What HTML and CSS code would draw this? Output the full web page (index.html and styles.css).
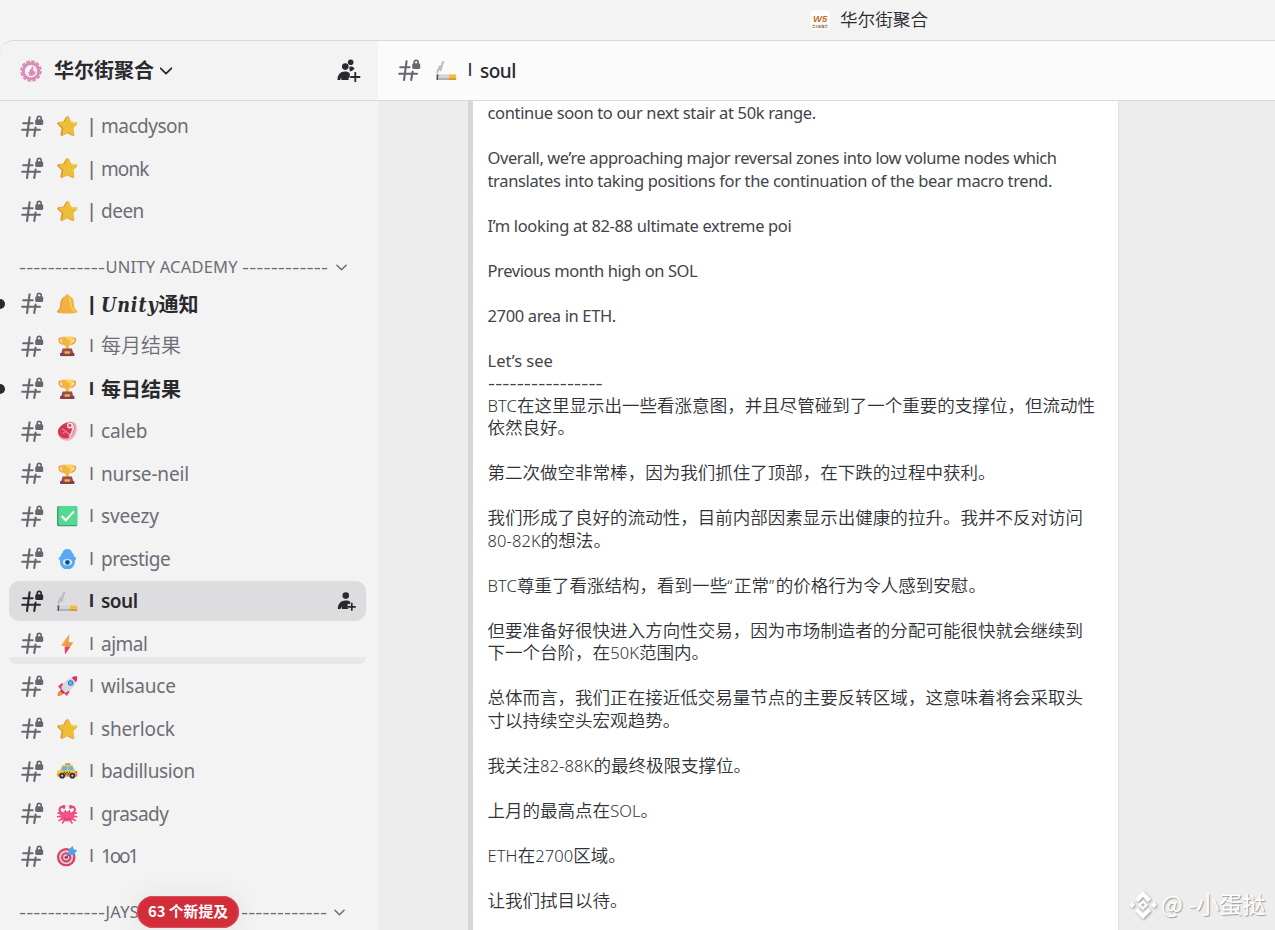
FILE: index.html
```html
<!DOCTYPE html>
<html lang="zh-CN">
<head>
<meta charset="utf-8">
<title>华尔街聚合</title>
<link rel="stylesheet" href="styles.css">
</head>
<body>
<svg class="defs" aria-hidden="true">
  <symbol id="hash" viewBox="0 0 23 23">
    <g fill="none" stroke="currentColor" stroke-width="2.1" stroke-linecap="round"><path d="M8.6 2.200 6 21M14.600 12.600 13.200 21M2.200 8.200H11.600M1.200 14.800H19"/><path d="M16.200 5V3.400a2 2 0 0 1 4 0V5" stroke-width="1.600"/></g>
    <rect x="14.200" y="4.200" width="8" height="5.800" rx="1.500" fill="currentColor"/>
  </symbol>
  <symbol id="chev" viewBox="0 0 12 12"><path d="M1 3.500 6 8.500 11 3.500" fill="none" stroke="currentColor" stroke-width="1.600" stroke-linecap="round" stroke-linejoin="round"/></symbol>
  <symbol id="invite" viewBox="0 0 19 19">
    <circle cx="8.800" cy="3.600" r="3.300" fill="currentColor"/>
    <path d="M.8 17c0-5.500 3.200-8.600 8-8.600 1.800 0 3.300.4 4.400 1.300v2.300h-2.500v4l1 1H5l-.6-2.400L3.600 17z" fill="currentColor"/>
    <path d="M14.800 10.800v8M10.800 14.800h8" stroke="currentColor" stroke-width="1.700"/>
  </symbol>
  <symbol id="people" viewBox="0 0 24 24">
    <circle cx="8.300" cy="7.600" r="3.300" fill="currentColor"/><circle cx="13.700" cy="3.200" r="2.800" fill="currentColor"/>
    <path d="M.5 21c0-5.500 3-8.500 7.500-8.500 2 0 3.600.5 4.800 1.700V18l-1.500 1.500.5 1.500H4.500L4 18.400 3.200 21z" fill="currentColor"/>
    <path d="M12.500 7.600c2.200-.4 4 .2 5.200 1.900l-2 1.800-2.400 1.100-.8-1.300z" fill="currentColor"/>
    <path d="M18.300 13v10M13.300 18h10" stroke="currentColor" stroke-width="1.800"/>
  </symbol>
  <symbol id="star" viewBox="0 0 20 20">
    <path d="M9.700.3c.8-.4 1.500 0 1.800.8l1.800 4.400 5.400.5c1.300.2 1.500 1.400.7 2.200l-3.700 3.600 1.200 5.800c.2 1.500-1 2.200-2.200 1.600L10 16.800l-4.500 2.400c-1.300.5-2.400-.3-2.100-1.600l1.100-5.700L.5 8C-.2 7.100.1 6.200 1.300 6l4.900-.6L8.500 1.200z" fill="#db9638"/>
    <path d="M10.700.2c.6 0 1 .4 1.300 1l1.700 4.400 5 .5c1.200.1 1.500 1.300.7 2.100l-3.600 3.600 1 5.700c.2 1.300-.7 1.900-1.800 1.400l-4.200-2.700-4.200 2.300c-1 .4-1.600-.2-1.400-1.300l1-5.700L2.100 8C1.400 7.200 1.700 6.500 2.800 6.300l4.800-.7 2-4.300c.3-.6.600-1.100 1.100-1.100z" fill="#edbe38"/>
    <path d="M13.700 5.600l5 .5c.9.100 1.300.9.900 1.600l-5-.7z" fill="#f5d15c"/>
  </symbol>
  <symbol id="bell" viewBox="0 0 20 20">
    <path d="M10 .3c1.100 0 1.800.7 1.900 1.700 3.100.9 4.400 3.600 4.600 7 .2 4 1 5.500 2.700 7.200.8.800.7 2.200-1 2.300-5.400.8-11 .8-16.400 0-1.600-.2-1.800-1.500-1-2.300 1.900-1.700 2.600-3.200 2.700-7.200.2-3.400 1.500-6.100 4.600-7C8.200 1 8.900.3 10 .3z" fill="#f3b13f"/>
    <path d="M6.500 3.300C4.300 5.400 5 9.800 4 13c-.8 2-2.500 2.800-2.200 5.500-1.600-.2-1.800-1.500-1-2.300 1.900-1.700 2.600-3.200 2.700-7.200.1-2.500.9-4.600 3-5.700z" fill="#e78c41"/>
    <path d="M11.500 3c2 1.500 1.500 5 2.300 9 .6 2.300 2 3.500 3.700 5" fill="none" stroke="#fad15e" stroke-width="1.500"/>
  </symbol>
  <symbol id="trophy" viewBox="0 0 20 20">
    <path d="M4.500 2.500H2.300c-.5 3 .7 4.900 4 5.600M15.500 2.500h2.200c.5 3-.7 4.900-4 5.600" fill="none" stroke="#ed9c3d" stroke-width="1.500"/>
    <path d="M4.200.7h11.600c.2 4.700-1 8-4.300 9.100V13H8.500V9.800C5.200 8.700 4 5.400 4.200.7z" fill="#f4b53f"/><path d="M9 .7h6.800c.1 4-.7 6.500-3.300 8.300C14 5 12.500 3 9 3z" fill="#fbd45b"/>
    <path d="M5.400 12.300h9.200l1.200 4.200H4.200z" fill="#9a4e49"/><path d="M3 16.500h14v2.200c0 .7-.4 1-1 1H4c-.6 0-1-.3-1-1z" fill="#824247"/>
    <rect x="7.300" y="14.800" width="5.400" height="2.400" rx=".5" fill="#efb24a"/>
  </symbol>
  <symbol id="meat" viewBox="0 0 20 20">
    <path d="M12 .8c5-1 7.500 2 7.400 6.700-.2 5.500-3.500 11-8.400 11.700C6 20 .5 16.500.7 11 .9 6 7 1.300 12 .8z" fill="#efb0b8"/>
    <path d="M10.700 1.500c4.300-1 6.600 1.400 6.400 5.300-.3 4.900-3.400 9.700-7.600 10.200C5 17.500.800 14.500 1 10 1.200 6.200 6.500 2 10.700 1.500z" fill="#d4365a"/>
    <path d="M13.500 2.500c4 2 2.200 8.500-1.500 12.700" fill="none" stroke="#f7dfd5" stroke-width="1.800"/><circle cx="12.600" cy="4.300" r="2.900" fill="#f8e6df"/><circle cx="12.500" cy="4.300" r="1.500" fill="#d7516a"/><path d="M5 7.500l4 2.700 3 3M9 10.200 5.500 12" fill="none" stroke="#f27b91" stroke-width="1.200"/>
  </symbol>
  <symbol id="check" viewBox="0 0 20 20">
    <rect width="20" height="20" rx="2" fill="#3c9d73"/><rect x="1.400" width="18.600" height="18.500" rx="1.800" fill="#55d890"/><path d="M4.500 9.700 8.500 13.800 16.500 5.200" fill="none" stroke="#fff" stroke-width="2"/>
  </symbol>
  <symbol id="eye" viewBox="0 0 20 20">
    <path d="M5.500 3.600C5.800 1.300 7.500 0 10 0s4.300 1.300 4.700 3.600c1.300.5 1.700 1.800 1.700 3.200l2.100 1.800c.5 1-.3 2-1 2.400.3 5-2.600 9-7.400 9s-7.600-4-7.200-9C2 10.500 1.300 9.500 1.900 8.600l2-1.800C3.900 5.400 4.300 4.100 5.500 3.600z" fill="#59a9f5"/>
    <ellipse cx="10.200" cy="13" rx="4.400" ry="3.200" fill="#d7edff"/><circle cx="10.200" cy="13" r="2.500" fill="#3987d3"/><circle cx="10.200" cy="13" r="1.500" fill="#1e3257"/>
  </symbol>
  <symbol id="cig" viewBox="0 0 20 20">
    <path d="M1.500 12.800C.5 9.500 4.300 9 3.600 5.500M3.900 10.500C6.300 8 4.500 4.500 7.500 1.200" fill="none" stroke="#bcbcbe" stroke-width="1.900"/>
    <rect x=".5" y="14" width="2.500" height="5.500" fill="#55545b"/><rect x="2.200" y="14" width="10.500" height="5.500" fill="#d4d5d8"/><rect x="2.200" y="17.500" width="10.500" height="2" fill="#b2b3b8"/><rect x="12.500" y="14" width="7.300" height="5.500" fill="#f5c341"/><rect x="12.500" y="17.500" width="7.300" height="2" fill="#dc983f"/><path d="M14 15.500h1M17 16h1" stroke="#de963b"/>
  </symbol>
  <symbol id="bolt" viewBox="0 0 20 20">
    <path d="M12 .2 4.300 11.200 9 12 7.800 20 15.800 8.300 11.300 7.700z" fill="#ec9c40"/><path d="M12 .2 4.300 11.200 7 11.500l4-5z" fill="#f0a544"/><path d="M7.400 12.300 12.700 12.700 7.800 20z" fill="#e83c72"/>
  </symbol>
  <symbol id="rocket" viewBox="0 0 20 20">
    <path d="M.5 19.500c0-3 1-5 3.500-5.500l2.500 2.500c-1 2-3 3-6 3z" fill="#f09036"/><path d="M1 10.300 4.500 7l4 1-5 5zM9.500 19.500l2.700-4-.6-4-4.800 5z" fill="#e8386d"/>
    <path d="M4 12C6 6 11 1 18 1c.8 0 1.300.5 1.200 1.300C18.500 9.500 14 14 8 16.500z" fill="#d4d8df"/><path d="M4 12l4 4.500-2.300.8-2.300-2.500z" fill="#ce315d"/><path d="M14.500 1.700C16 .5 17.500.2 18.600.3c.8 0 1.400.5 1.200 1.300.1 1.500-.5 3-1.300 4.400z" fill="#dd3158"/><circle cx="13.300" cy="6.800" r="2.700" fill="#356eb0"/><circle cx="13.300" cy="6.800" r="1.900" fill="#5baef5"/>
  </symbol>
  <symbol id="taxi" viewBox="0 0 20 20">
    <path d="M8 2.300h5V4H8z" fill="#b49a53"/><path d="M5 4h10l2.500 5 2 1.200.5 4.800H.5L0 9.500 3 9z" fill="#f6c540"/><path d="M5.800 5h4v4H3.800zM11 5h3.800l1.500 4H11z" fill="#60b5f5"/><path d="M0 12.500h20V15H.5z" fill="#dd923b"/><path d="M6.500 10.500h1.300v1.300H6.500zm2.600 0h1.300v1.300H9.100zm-1.300 1.300h1.300v1.300H7.800zm3.900-1.300H13v1.300h-1.300zm-1.300 1.300h1.300v1.300h-1.300z" fill="#4b403c"/><rect x="18" y="10" width="2" height="2" fill="#e54f62"/><circle cx="5" cy="14.300" r="2.800" fill="#342f38"/><circle cx="15" cy="14.300" r="2.800" fill="#342f38"/><circle cx="5" cy="14.300" r="1.100" fill="#c6c9cf"/><circle cx="15" cy="14.300" r="1.100" fill="#c6c9cf"/>
  </symbol>
  <symbol id="crab" viewBox="0 0 20 20">
    <path d="M5.500 9C2 8 1.500 4 4.500 2.500M14.500 9c3.500-1 4-5 1-6.500" fill="none" stroke="#ed4477" stroke-width="2"/><path d="M3.500 3.500C4.500.8 7 .5 8.500 1.500L7.500 5 6 4.500zM16.500 3.500c-1-2.700-3.500-3-5-2L12.500 5 14 4.500z" fill="#ed4477"/>
    <path d="M4.500 10 .5 8.500M4 12 0 12.500M5 14.500l-3.500 2M7 16l-2 3M15.500 10l4-1.500M16 12l4 .5M15 14.500l3.500 2M13 16l2 3" stroke="#ed4477" stroke-width="1.500"/><ellipse cx="10" cy="12" rx="7" ry="5" fill="#f45484"/><path d="M8 8V6M12 8V6" stroke="#6e2943"/><path d="M7 14.500h1m1.500 0h1m1.500 0h1" stroke="#a92c58"/>
  </symbol>
  <symbol id="target" viewBox="0 0 20 20">
    <circle cx="9" cy="11" r="9" fill="#dc3d60"/><circle cx="9" cy="11" r="6.800" fill="#d8d2da"/><circle cx="9" cy="11" r="5" fill="#dc3d60"/><circle cx="9" cy="11" r="3" fill="#d8d2da"/><circle cx="9" cy="11" r="1.600" fill="#ba3156"/><path d="M9 11 15 5" stroke="#705a75" stroke-width="1.500"/><path d="M11 9 11.300 4 15 0 16.500 3.300 20 4.200 16 8.600z" fill="#4ca3ed"/>
  </symbol>
</svg>

<header class="titlebar">
  <svg class="app-icon" viewBox="0 0 20 20"><rect width="20" height="20" rx="4" fill="#fffdf9"/><text class="logo-big" x="3" y="11.500">W5</text><text class="logo-small" x="2" y="17.500">华尔街聚合</text></svg>
  <span>华尔街聚合</span>
</header>

<div class="app">
  <aside class="sidebar">
    <div class="server">
      <svg class="badge" viewBox="0 0 22 22"><circle cx="11" cy="11" r="9.200" fill="#dc8cb8"/><circle cx="11" cy="11" r="9.700" fill="none" stroke="#dc8cb8" stroke-width="2.200" stroke-dasharray="3.400 1.679"/><circle cx="11" cy="11.200" r="5.500" fill="none" stroke="#fff" stroke-width="1.300"/><path d="M6.300 11c0-3 2.200-5 4.700-5l1 1.600-2.200 2.200-.3 1.700-1.500.6 1.600 3.400c-2-.6-3.300-2.400-3.300-4.500zM13 7l2.300 2 .5 3-2.300-1.200z" fill="#fff"/><circle cx="6.200" cy="5.200" r=".9" fill="#6aaee8"/></svg>
      <b class="server-name">华尔街聚合</b>
      <svg class="server-chev"><use href="#chev"/></svg>
      <svg class="people"><use href="#people"/></svg>
    </div>
    <nav class="channels">
      <a class="row"><svg class="hash"><use href="#hash"/></svg><svg class="emoji"><use href="#star"/></svg><i class="bar">|</i><span class="tight">macdyson</span></a>
      <a class="row"><svg class="hash"><use href="#hash"/></svg><svg class="emoji"><use href="#star"/></svg><i class="bar">|</i><span class="tighter">monk</span></a>
      <a class="row"><svg class="hash"><use href="#hash"/></svg><svg class="emoji"><use href="#star"/></svg><i class="bar">|</i><span class="tight">deen</span></a>
      <div class="category"><span class="dash">------------</span><span class="cat-name unity">UNITY ACADEMY</span><span class="dash">------------</span><svg><use href="#chev"/></svg></div>
      <a class="row unread"><svg class="hash"><use href="#hash"/></svg><svg class="emoji"><use href="#bell"/></svg><i class="bar">|</i><span><em>Unity</em>通知</span></a>
      <a class="row cjk"><svg class="hash"><use href="#hash"/></svg><svg class="emoji"><use href="#trophy"/></svg><i>I</i><span>每月结果</span></a>
      <a class="row unread"><svg class="hash"><use href="#hash"/></svg><svg class="emoji"><use href="#trophy"/></svg><i>I</i><span>每日结果</span></a>
      <a class="row"><svg class="hash"><use href="#hash"/></svg><svg class="emoji"><use href="#meat"/></svg><i>I</i><span>caleb</span></a>
      <a class="row"><svg class="hash"><use href="#hash"/></svg><svg class="emoji"><use href="#trophy"/></svg><i>I</i><span>nurse-neil</span></a>
      <a class="row"><svg class="hash"><use href="#hash"/></svg><svg class="emoji"><use href="#check"/></svg><i>I</i><span>sveezy</span></a>
      <a class="row"><svg class="hash"><use href="#hash"/></svg><svg class="emoji"><use href="#eye"/></svg><i>I</i><span class="tight">prestige</span></a>
      <a class="row active"><svg class="hash"><use href="#hash"/></svg><svg class="emoji"><use href="#cig"/></svg><i>I</i><span class="tight">soul</span><svg class="invite"><use href="#invite"/></svg></a>
      <a class="row trail"><svg class="hash"><use href="#hash"/></svg><svg class="emoji"><use href="#bolt"/></svg><i>I</i><span class="tight">ajmal</span></a>
      <a class="row"><svg class="hash"><use href="#hash"/></svg><svg class="emoji"><use href="#rocket"/></svg><i>I</i><span>wilsauce</span></a>
      <a class="row"><svg class="hash"><use href="#hash"/></svg><svg class="emoji"><use href="#star"/></svg><i>I</i><span>sherlock</span></a>
      <a class="row"><svg class="hash"><use href="#hash"/></svg><svg class="emoji"><use href="#taxi"/></svg><i>I</i><span class="slight">badillusion</span></a>
      <a class="row"><svg class="hash"><use href="#hash"/></svg><svg class="emoji"><use href="#crab"/></svg><i>I</i><span class="tight">grasady</span></a>
      <a class="row"><svg class="hash"><use href="#hash"/></svg><svg class="emoji"><use href="#target"/></svg><i>I</i><span class="digits">1oo1</span></a>
      <div class="category"><span class="dash">------------</span><span class="cat-name jays">JAYS</span><span class="dash">------------</span><svg><use href="#chev"/></svg></div>
    </nav>
    <div class="mentions">63 个新提及</div>
  </aside>

  <main class="chat">
    <div class="chat-head"><svg class="hash"><use href="#hash"/></svg><svg class="emoji"><use href="#cig"/></svg><i>I</i><span>soul</span></div>
    <div class="messages">
      <article class="embed">
        <p class="en">continue soon to our next stair at 50k range.</p>
        <p class="en"><span class="snug">Overall, we’re approaching major reversal zones into low volume nodes which</span><br>translates into taking positions for the continuation of the bear macro trend.</p>
        <p class="en">I’m looking at 82-88 ultimate extreme poi</p>
        <p class="en"><span class="snug">Previous month high on SOL</span></p>
        <p class="en">2700 area in ETH.</p>
        <p class="en"><span class="loose">Let’s see</span><br><span class="rule">----------------</span></p>
        <p class="join"><b>BTC</b>在这里显示出一些看涨意图，并且尽管碰到了一个重要的支撑位，但流动性<br>依然良好。</p>
        <p>第二次做空非常棒，因为我们抓住了顶部，在下跌的过程中获利。</p>
        <p>我们形成了良好的流动性，目前内部因素显示出健康的拉升。我并不反对访问<br><b>80-82K</b>的想法。</p>
        <p><b>BTC</b>尊重了看涨结构，看到一些<b class="quote">“</b>正常<b class="quote">”</b>的价格行为令人感到安慰。</p>
        <p>但要准备好很快进入方向性交易，因为市场制造者的分配可能很快就会继续到<br>下一个台阶，在<b>50K</b>范围内。</p>
        <p>总体而言，我们正在接近低交易量节点的主要反转区域，这意味着将会采取头<br>寸以持续空头宏观趋势。</p>
        <p>我关注<b>82-88K</b>的最终极限支撑位。</p>
        <p>上月的最高点在<b>SOL</b>。</p>
        <p><b>ETH</b>在<b>2700</b>区域。</p>
        <p>让我们拭目以待。</p>
      </article>
    </div>
  </main>
</div>

<div class="watermark">
  <svg viewBox="0 0 28 28"><g fill="#fff"><path d="M14 0 22 8 19 11 14 6 9 11 6 8zM14 28 6 20 9 17 14 22 19 17 22 20zM3 11 6 14 3 17 0 14zM25 11l3 3-3 3-3-3z"/><path fill-rule="evenodd" d="M14 9l5 5-5 5-5-5zm0 3-2 2 2 2 2-2z"/></g></svg>
  <span>@ -小蛋挞</span>
</div>
</body>
</html>
```
FILE: styles.css
```css
* { box-sizing: border-box; }
body {
  margin: 0;
  width: 1275px;
  height: 930px;
  overflow: hidden;
  background: #f3f3f3;
  color: #29292e;
  font-family: "Noto Sans", "Noto Sans CJK SC", sans-serif;
  display: flex;
  flex-direction: column;
}
.defs { position: absolute; width: 0; height: 0; }
i { font-style: normal; }

.titlebar {
  height: 40px;
  flex: none;
  display: flex;
  align-items: center;
  gap: 10px;
  padding-left: 810px;
  font-family: "Noto Sans CJK SC", sans-serif;
  font-size: 17.6px;
  font-weight: 350;
}
.titlebar span { padding-bottom: 4px; }
.app-icon { width: 20px; height: 20px; }
.logo-big { font: italic bold 9.5px "Liberation Sans", sans-serif; fill: #b8742f; }
.logo-small { font: bold 3.2px "Noto Sans CJK SC", sans-serif; fill: #806a50; }

.app {
  flex: 1;
  min-height: 0;
  display: flex;
  border-top: 1px solid #d9d9da;
  border-top-left-radius: 14px;
  overflow: hidden;
}
.sidebar {
  position: relative;
  width: 378px;
  flex: none;
  display: flex;
  flex-direction: column;
}
.server {
  height: 60px;
  flex: none;
  display: flex;
  align-items: center;
  padding: 0 17px 0 20px;
  border-bottom: 1px solid #d9d9da;
}
.badge { width: 22px; height: 22px; }
.server-name {
  margin-left: 12px;
  padding-bottom: 2px;
  font: bold 20px/28px "Noto Sans CJK SC", sans-serif;
}
.server-chev { width: 14px; height: 14px; margin-left: 5px; padding: 0.5px; }
.people { width: 24px; height: 24px; margin-left: auto; }

.channels {
  display: flex;
  flex-direction: column;
  gap: 2.5px;
  padding: 5.2px 12.5px 0 9px;
}
.row {
  position: relative;
  height: 40px;
  flex: none;
  display: grid;
  grid-template-columns: 23px 33px 23px 1fr auto;
  align-items: center;
  padding: 0 9px 0 12px;
  border-radius: 10px;
  color: #6c6d75;
  font-size: 19px;
  line-height: 28px;
  letter-spacing: -0.15px;
}
.hash { width: 23px; height: 23px; color: #66676f; }
.emoji { width: 20.5px; height: 20.5px; }
.row .emoji { margin-left: 13px; }
.row i { padding-left: 12px; font: 18px/28px "Liberation Sans", sans-serif; }
.row i.bar { font-size: 20px; }
.row span { padding-left: 1px; }
.row .slight { letter-spacing: -0.35px; }
.row .tight { letter-spacing: -0.5px; }
.row .tighter { letter-spacing: -0.9px; }
.row .digits { letter-spacing: -2.2px; }
.cjk span { font: 350 20px/28px "Noto Sans CJK SC", sans-serif; letter-spacing: 0; padding-bottom: 2px; }
.unread { color: #29292e; }
.row.unread i { font-weight: 700; }
.unread span { font: bold 20px/28px "Noto Sans CJK SC", sans-serif; letter-spacing: 0; }
.unread em {
  font: italic bold 19.5px/20px "DejaVu Serif Condensed", "DejaVu Serif", serif;
  letter-spacing: 0.9px;
}
.unread::before {
  content: "";
  position: absolute;
  left: -14px;
  top: 15px;
  width: 10px;
  height: 10px;
  border-radius: 5px;
  background: #29292e;
}
.active { width: 357px; background: #dddddf; color: #29292e; font-weight: 600; }
.row.active i { font-weight: 700; }
.active .hash { color: #29292e; }
.invite { width: 19px; height: 19px; margin-right: 1px; }
.trail::after {
  content: "";
  position: absolute;
  left: 0;
  top: 33px;
  width: 357px;
  height: 7px;
  border-radius: 0 0 10px 10px;
  background: #e8e8e8;
}
.category {
  flex: none;
  height: 47.6px;
  padding: 19.5px 0 0 10px;
  display: flex;
  align-items: center;
  color: #6c6d75;
  font-size: 16.5px;
  line-height: 22px;
}
.category svg { width: 11px; height: 11px; margin-left: 7px; }
.dash {
  width: 64px;
  margin-right: 22.5px;
  transform: scaleX(1.35);
  transform-origin: left;
  white-space: nowrap;
}
.cat-name { white-space: nowrap; }
.unity { width: 136.5px; letter-spacing: 0.2px; }
.jays { width: 135px; letter-spacing: 0.3px; }
.mentions {
  position: absolute;
  left: 137px;
  top: 855px;
  width: 102px;
  height: 32px;
  border-radius: 16px;
  background: #d22d39;
  color: #fff;
  font: bold 14.8px/30px "Noto Sans CJK SC", sans-serif;
  text-align: center;
  box-shadow: 0 0 0 1px #d8505a inset, 0 0 24px 8px rgba(0, 0, 0, 0.04);
}

.chat { flex: 1; display: flex; flex-direction: column; min-width: 0; }
.chat-head {
  height: 60px;
  flex: none;
  display: flex;
  align-items: center;
  padding-left: 20px;
  background: #fbfbfb;
  border-bottom: 1px solid #d9d9da;
  font-size: 19px;
  font-weight: 500;
  letter-spacing: -0.5px;
}
.chat-head .emoji { margin-left: 15px; }
.chat-head i { margin-left: 11px; width: 12.5px; font: 18px "Liberation Sans", sans-serif; }
.messages { flex: 1; min-height: 0; overflow: hidden; background: #ededed; padding-left: 90px; }
.embed {
  width: 651px;
  height: 900px;
  padding: 1px 0 0 14.5px;
  background: #fff;
  border-left: 5px solid #d6d6d7;
  border-right: 1px solid #e2e2e3;
  color: #303137;
  font: 350 17.53px/22.5px "Noto Sans CJK SC", sans-serif;
  white-space: nowrap;
}
.embed p { margin: 0 0 22.5px; position: relative; top: -1px; }
.embed p:has(+ .join) { margin-bottom: 0; }
.embed .en {
  top: 0;
  color: #43444a;
  font-family: "Noto Sans", sans-serif;
  font-size: 16.5px;
  font-weight: 400;
  letter-spacing: -0.35px;
}
.en .snug { letter-spacing: -0.42px; }
.en .loose { letter-spacing: 0; }
.embed b { font: 350 16.5px/0 "Noto Sans", sans-serif; letter-spacing: 0.1px; }
.embed .quote { letter-spacing: 1.6px; }
.embed .rule {
  display: inline-block;
  letter-spacing: 0;
  transform: scaleX(1.35);
  transform-origin: left;
}

.watermark {
  position: absolute;
  left: 1129px;
  top: 887px;
  display: flex;
  align-items: center;
  gap: 4px;
  color: #fff;
  font: 400 23.2px/32px "Noto Sans CJK SC", sans-serif;
  text-shadow: 1px 1px 1px #999;
  white-space: nowrap;
}
.watermark span { padding-bottom: 3px; }
.watermark svg { width: 28px; height: 28px; filter: drop-shadow(1px 1px 1px #999); }
```
